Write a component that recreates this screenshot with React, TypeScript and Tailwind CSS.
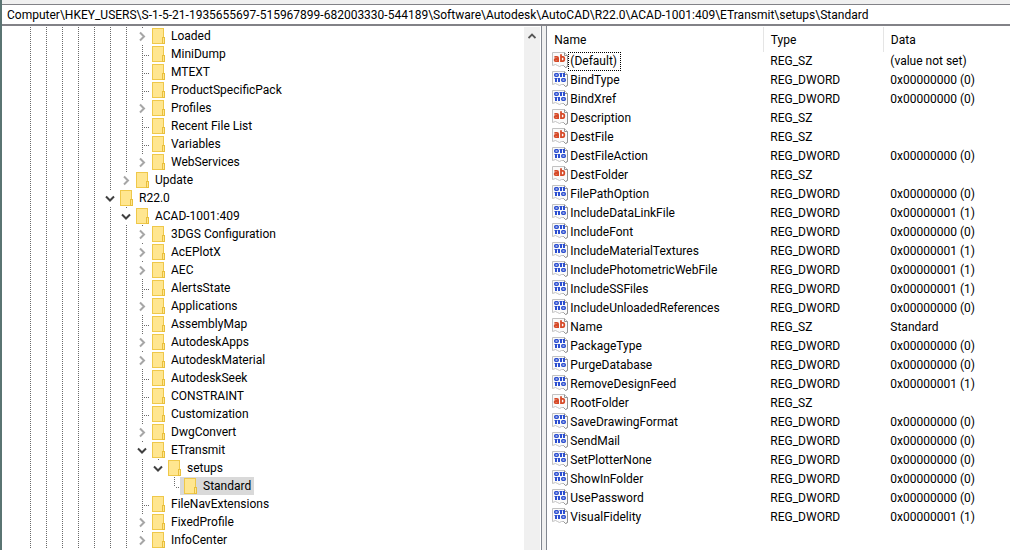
import React from 'react';

type Kind = 'closed' | 'open' | 'leaf';
type Node = { name: string; depth: number; kind: Kind; last?: boolean };

const closed = (name: string, depth = 7): Node => ({ name, depth, kind: 'closed' });
const leaf = (name: string, depth = 7, last = false): Node => ({ name, depth, kind: 'leaf', last });
const open = (name: string, depth: number): Node => ({ name, depth, kind: 'open' });

const nodes: Node[] = [
  closed('Loaded'), leaf('MiniDump'), leaf('MTEXT'), leaf('ProductSpecificPack'), closed('Profiles'),
  leaf('Recent File List'), leaf('Variables'), closed('WebServices'), closed('Update', 6),
  open('R22.0', 5), open('ACAD-1001:409', 6), closed('3DGS Configuration'), closed('AcEPlotX'), closed('AEC'),
  leaf('AlertsState'), closed('Applications'), leaf('AssemblyMap'), closed('AutodeskApps'),
  closed('AutodeskMaterial'), leaf('AutodeskSeek'), leaf('CONSTRAINT'), leaf('Customization'),
  closed('DwgConvert'), open('ETransmit', 7), open('setups', 8), leaf('Standard', 9, true),
  leaf('FileNavExtensions'), closed('FixedProfile'), closed('InfoCenter'),
];

type Value = { name: string; type: 'REG_SZ' | 'REG_DWORD'; data: string };
const sz = (name: string, data = ''): Value => ({ name, type: 'REG_SZ', data });
const dword = (name: string, n: number): Value => ({ name, type: 'REG_DWORD', data: `0x0000000${n} (${n})` });

const values: Value[] = [
  sz('(Default)', '(value not set)'), dword('BindType', 0), dword('BindXref', 0), sz('Description'),
  sz('DestFile'), dword('DestFileAction', 0), sz('DestFolder'), dword('FilePathOption', 0),
  dword('IncludeDataLinkFile', 1), dword('IncludeFont', 0), dword('IncludeMaterialTextures', 1),
  dword('IncludePhotometricWebFile', 1), dword('IncludeSSFiles', 1), dword('IncludeUnloadedReferences', 0),
  sz('Name', 'Standard'), dword('PackageType', 0), dword('PurgeDatabase', 0), dword('RemoveDesignFeed', 1),
  sz('RootFolder'), dword('SaveDrawingFormat', 0), dword('SendMail', 0), dword('SetPlotterNone', 0),
  dword('ShowInFolder', 0), dword('UsePassword', 0), dword('VisualFidelity', 1),
];

function Folder() {
  return (
    <svg width="14" height="16" viewBox="0 0 14 16" className="shrink-0" aria-hidden="true">
      <rect x="0.5" y="0.5" width="11" height="15" fill="#ffe690" stroke="#efc84a" />
      <rect x="10.5" y="9.5" width="2" height="6" fill="#ffe690" stroke="#e8bf3c" />
    </svg>
  );
}

function ValueIcon({ type }: { type: Value['type'] }) {
  return (
    <svg width="16" height="16" viewBox="0 0 16 16" className="shrink-0" aria-hidden="true">
      <path d="M0.5 0.5H12.5L15.5 3.5V14.5L13.5 15.5L11.5 13.5H9.5L7.5 14.5L5.5 13.5L3.5 12.5L0.5 13.5Z" fill="#fafafa" stroke="#c2c2c2" />
      <path d="M12.5 0.5V3.5H15.5V14.5L13.5 15.5L11.5 13.5" fill="none" stroke="#949494" />
      {type === 'REG_SZ' ? (
        <g fill="none" stroke="#d64a28" strokeWidth="1.8">
          <path d="M2.4 4.9H5Q6.1 4.9 6.1 6V10M6.1 7H3.6Q2.6 7 2.6 8Q2.6 9.1 3.6 9.1H6.1" />
          <path d="M9 2.2V10M9 4.9H11Q12.3 4.9 12.3 7Q12.3 9.1 11 9.1H9" />
        </g>
      ) : (
        <g fill="none" stroke="#2b4ed0" strokeWidth="1.5">
          <rect x="2.75" y="2.75" width="3.5" height="2.5" rx="0.9" />
          <path d="M9 2V6M12 2V6M4 7V11M7 7V11" strokeWidth="2" />
          <path d="M7.5 2.5H8M10.5 2.5H11M2.5 7.5H3M5.5 7.5H6" strokeWidth="1" />
          <rect x="9.75" y="7.75" width="3.5" height="2.5" rx="0.9" />
        </g>
      )}
    </svg>
  );
}

function Guide({ className = 'h-full' }: { className?: string }) {
  return (
    <span className={`block w-px shrink-0 bg-[repeating-linear-gradient(to_bottom,#6a6a6a_0px,#6a6a6a_1px,transparent_1px,transparent_2px)] ${className}`} />
  );
}

function Toggle({ kind }: { kind: Kind }) {
  return (
    <svg width="10" height="14" viewBox="0 0 10 14" aria-hidden="true">
      {kind === 'open' ? (
        <path d="M1 5.5L5 9.5L9 5.5" fill="none" stroke="#404040" strokeWidth="2" />
      ) : (
        <path d="M3 3.5L7 7.5L3 11.5" fill="none" stroke="#a6a6a6" strokeWidth="2" />
      )}
    </svg>
  );
}

function TreeRow({ node }: { node: Node }) {
  const selected = node.name === 'Standard';
  return (
    <li className="flex h-[18px] items-center">
      {Array.from({ length: node.depth }, (_, i) => (
        <span key={i} className="h-full w-4 shrink-0 pl-2">
          {i !== 8 && <Guide />}
        </span>
      ))}
      {node.kind === 'leaf' ? (
        <span className="flex h-full w-4 shrink-0 pl-2">
          <Guide className={node.last ? 'h-[10px]' : 'h-full'} />
          <span className="mt-[10px] h-px w-[6px] bg-[repeating-linear-gradient(to_right,transparent_0px,transparent_1px,#6a6a6a_1px,#6a6a6a_2px)]" />
        </span>
      ) : (
        <button
          type="button"
          aria-label={`${node.kind === 'open' ? 'Collapse' : 'Expand'} ${node.name}`}
          className="flex h-full w-4 shrink-0 flex-col items-center"
        >
          <span className="ml-px h-px w-px bg-[#6a6a6a]" />
          <span className="mt-px block h-4">
            <Toggle kind={node.kind} />
          </span>
        </button>
      )}
      <span className={`-ml-[2px] flex h-full items-center gap-[5px] pr-[3px] pl-1 ${selected ? 'bg-[#d9d9d9]' : ''}`}>
        <Folder />
        <span className="whitespace-nowrap">{node.name}</span>
      </span>
    </li>
  );
}

export default function App() {
  return (
    <div className="flex h-screen flex-col overflow-hidden border-l-2 border-[#5a7472] bg-white font-[Roboto,sans-serif] text-xs leading-[18px] text-black">
      <div className="h-1 shrink-0 bg-[#f0f0f0]" />
      <input
        type="text"
        aria-label="Address"
        readOnly
        className="h-[22px] w-full shrink-0 border-t border-b-2 border-[#828287] bg-white px-[5px] outline-none"
        value={'Computer\\HKEY_USERS\\S-1-5-21-1935655697-515967899-682003330-544189\\Software\\Autodesk\\AutoCAD\\R22.0\\ACAD-1001:409\\ETransmit\\setups\\Standard'}
      />
      <main className="flex min-h-0 flex-1">
        <nav aria-label="Registry keys" className="flex w-[54.1%] shrink-0">
          <ul className="min-w-0 flex-1 overflow-hidden pt-px pl-5">
            {nodes.map((n) => <TreeRow key={n.name} node={n} />)}
          </ul>
          <div className="mt-px flex w-4 shrink-0 justify-center bg-[#f0f0f0] pt-[6px]">
            <svg width="8" height="6" viewBox="0 0 8 6" aria-hidden="true">
              <path d="M0.5 5L4 1.5L7.5 5" fill="none" stroke="#555" strokeWidth="1.8" />
            </svg>
          </div>
          <div className="ml-px w-[6px] shrink-0 border-x border-[#828790] bg-[#f0f0f0]" />
        </nav>
        <div className="min-w-0 flex-1 overflow-hidden pt-px">
          <table className="w-full table-fixed border-collapse text-left">
            <colgroup>
              <col className="w-[216px]" />
              <col className="w-[120px]" />
              <col />
            </colgroup>
            <thead>
              <tr className="h-[25px]">
                <th className="border-r border-[#e5e5e5] p-0 pl-[7px] font-normal">Name</th>
                <th className="border-r border-[#e5e5e5] p-0 pl-[7px] font-normal">Type</th>
                <th className="p-0 pl-[7px] font-normal">Data</th>
              </tr>
            </thead>
            <tbody>
              {values.map((v, i) => (
                <tr key={v.name} className="h-[19px]">
                  <td className="p-0 pl-[5px]">
                    <span className="flex h-[19px] items-start">
                      <ValueIcon type={v.type} />
                      <span className={`pr-1 pl-[2px] leading-[19px] ${i === 0 ? 'outline-1 -outline-offset-1 outline-dotted outline-black' : ''}`}>{v.name}</span>
                    </span>
                  </td>
                  <td className="p-0 pl-[7px] leading-[19px]">{v.type}</td>
                  <td className="p-0 pl-[7px] leading-[19px]">{v.data}</td>
                </tr>
              ))}
            </tbody>
          </table>
        </div>
      </main>
    </div>
  );
}
